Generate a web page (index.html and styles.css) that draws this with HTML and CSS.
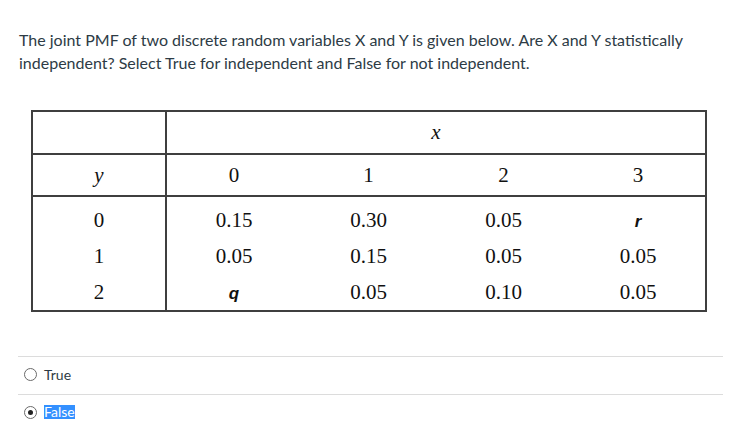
FILE: index.html
```html
<!DOCTYPE html>
<html>
<head>
<meta charset="utf-8">
<link rel="stylesheet" href="styles.css">
</head>
<body>
<div class="question">
  <p class="prompt">The joint PMF of two discrete random variables X and Y is given below. Are X and Y statistically independent? Select True for independent and False for not independent.</p>
  <table class="pmf">
    <colgroup>
      <col class="c-y">
      <col class="c-x"><col class="c-x"><col class="c-x"><col class="c-x">
    </colgroup>
    <tr class="row-head">
      <td class="col-y"></td>
      <td colspan="4"><span class="var">x</span></td>
    </tr>
    <tr class="row-sub">
      <td class="col-y"><span class="var">y</span></td>
      <td>0</td><td>1</td><td>2</td><td>3</td>
    </tr>
    <tr class="row-data first">
      <td class="col-y">0</td>
      <td>0.15</td><td>0.30</td><td>0.05</td><td><span class="sym">r</span></td>
    </tr>
    <tr class="row-data">
      <td class="col-y">1</td>
      <td>0.05</td><td>0.15</td><td>0.05</td><td>0.05</td>
    </tr>
    <tr class="row-data last">
      <td class="col-y">2</td>
      <td><span class="sym">q</span></td><td>0.05</td><td>0.10</td><td>0.05</td>
    </tr>
  </table>
  <div class="answers">
    <div class="answer">
      <span class="radio"></span>
      <span class="label">True</span>
    </div>
    <div class="answer">
      <span class="radio checked"></span>
      <span class="label selected">False</span>
    </div>
  </div>
</div>
</body>
</html>
```
FILE: styles.css
```css
html, body {
  margin: 0;
  padding: 0;
  background: #ffffff;
}
body {
  font-family: Lato, "Liberation Sans", sans-serif;
  color: #2d3b45;
}
.question {
  padding: 0 7px 0 18px;
}
.prompt {
  margin: 0;
  padding: 28px 0 0 1px;
  font-size: 16px;
  line-height: 23px;
  width: 700px;
}
.pmf {
  margin: 36px 0 0 13px;
  border-collapse: collapse;
  border: 2px solid #3f3f3f;
  font-family: "Liberation Serif", "Times New Roman", serif;
  font-size: 21px;
  color: #111;
  table-layout: fixed;
  width: 675px;
}
.c-y {
  width: 134px;
}
.c-x {
  width: 135px;
}
.pmf td {
  text-align: center;
  padding: 0;
}
.pmf td.col-y {
  border-right: 2px solid #3f3f3f;
}
.row-head td {
  height: 41px;
  border-bottom: 2px solid #3f3f3f;
}
.row-sub td {
  height: 40px;
  border-bottom: 2px solid #3f3f3f;
}
.row-data td {
  height: 36px;
}
.row-data.first td {
  height: 42px;
  padding-top: 6px;
  box-sizing: border-box;
}
.var {
  font-style: italic;
}
.sym {
  font-family: "Liberation Sans", "DejaVu Sans", sans-serif;
  font-style: italic;
  font-weight: bold;
  font-size: 17px;
}
.answers {
  margin-top: 44px;
}
.answer {
  display: flex;
  align-items: center;
  height: 26px;
  padding: 11px 0 0 6px;
  border-top: 1px solid #dcdcdc;
  align-items: flex-start;
}
.radio {
  width: 11px;
  height: 11px;
  border: 1px solid #6a6a6a;
  border-radius: 50%;
  box-sizing: content-box;
  display: flex;
  align-items: center;
  justify-content: center;
  margin-right: 7px;
  flex: none;
}
.radio.checked::after {
  content: "";
  width: 5px;
  height: 5px;
  border-radius: 50%;
  background: #222;
}
.label {
  font-size: 14px;
  line-height: 13px;
  color: #2d3b45;
}
.label.selected {
  background: #3390ff;
  color: #ffffff;
  line-height: 14px;
  margin-top: -1px;
}
```
